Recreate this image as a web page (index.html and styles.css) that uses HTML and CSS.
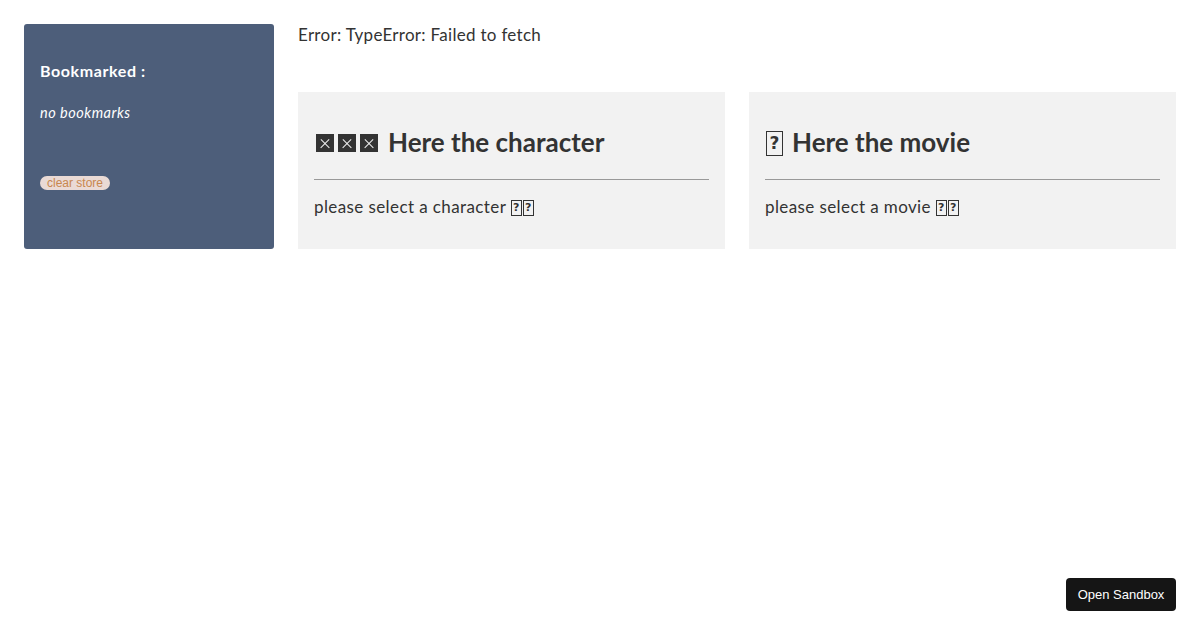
FILE: index.html
```html
<!DOCTYPE html>
<html>
<head>
<meta charset="utf-8">
<link rel="stylesheet" href="styles.css">
</head>
<body>
<div class="app">
  <aside class="sidebar">
    <h3 class="side-title">Bookmarked :</h3>
    <p class="empty">no bookmarks</p>
    <button class="clear">clear store</button>
  </aside>
  <main class="main">
    <p class="error">Error: TypeError: Failed to fetch</p>
    <div class="cards">
      <section class="card">
        <h2 class="card-title"><span class="xbox"></span><span class="xbox"></span><span class="xbox last"></span>Here the character</h2>
        <hr class="rule">
        <p class="card-text">please select a character <span class="qbox">?</span><span class="qbox">?</span></p>
      </section>
      <section class="card">
        <h2 class="card-title"><span class="qbox big">?</span>Here the movie</h2>
        <hr class="rule">
        <p class="card-text">please select a movie <span class="qbox">?</span><span class="qbox">?</span></p>
      </section>
    </div>
  </main>
</div>
<a class="sandbox">Open Sandbox</a>
</body>
</html>
```
FILE: styles.css
```css
* { box-sizing: border-box; }
body {
  margin: 0;
  padding: 24px;
  font-family: Lato, "Open Sans", sans-serif;
  color: #333;
  background: #fff;
}
.app {
  display: flex;
  gap: 24px;
  align-items: flex-start;
}
.sidebar {
  width: 250px;
  flex: none;
  height: 225px;
  background: #4d5e7a;
  border-radius: 3px;
  padding: 36px 16px;
  color: #fff;
}
.side-title {
  margin: 0;
  font-size: 16px;
  font-weight: 700;
  line-height: 22px;
  letter-spacing: 0.6px;
}
.empty {
  margin: 22px 0 0;
  font-size: 14.5px;
  font-style: italic;
  letter-spacing: 0.5px;
}
.clear {
  margin-top: 55px;
  display: block;
  border: none;
  background: #eadad5;
  color: #c8874e;
  font-family: "Liberation Sans", Arial, sans-serif;
  font-size: 12px;
  border-radius: 8px;
  padding: 0 7px;
  height: 14px;
  line-height: 14px;
}
.main { flex: 1; }
.error {
  margin: 0;
  font-size: 17px;
  line-height: 22px;
  letter-spacing: 0.3px;
}
.cards {
  margin-top: 46px;
  display: flex;
  gap: 24px;
}
.card {
  flex: 1;
  height: 157px;
  background: #f2f2f2;
  padding: 30px 16px 0;
}
.card-title {
  margin: 0;
  font-size: 26px;
  font-weight: 700;
  line-height: 40px;
  display: flex;
  align-items: center;
}
.xbox {
  display: inline-block;
  width: 18px;
  height: 18px;
  background: #333;
  margin: 2px 4px 0 2px;
  position: relative;
  flex: none;
}
.xbox + .xbox { margin-left: 0; }
.xbox::before, .xbox::after {
  content: "";
  position: absolute;
  left: 3px; top: 8.5px;
  width: 12px; height: 1.3px;
  background: #f2f2f2;
  transform: rotate(45deg);
}
.xbox::after { transform: rotate(-45deg); }
.xbox.last { margin-right: 10px; }
.qbox {
  display: inline-block;
  overflow: hidden;
  width: 11px;
  height: 16px;
  border: 1px solid #333;
  font-family: "DejaVu Sans", sans-serif;
  font-size: 11px;
  font-weight: 700;
  line-height: 14px;
  text-align: center;
  vertical-align: -3px;
  letter-spacing: 0;
}
.qbox + .qbox { margin-left: 1px; }
.qbox.big {
  width: 17px;
  height: 25px;
  border-width: 1.5px;
  font-size: 17px;
  line-height: 22px;
  margin: 2px 9px 0 1px;
  flex: none;
}
.rule {
  margin: 17px 0 0;
  border: none;
  border-top: 1px solid #999;
}
.card-text {
  margin: 16px 0 0;
  font-size: 17px;
  letter-spacing: 0.4px;
}
.sandbox {
  position: fixed;
  right: 24px;
  bottom: 19px;
  width: 110px;
  height: 33px;
  background: #151515;
  color: #fff;
  border-radius: 4px;
  font-family: "Liberation Sans", Arial, sans-serif;
  font-size: 13px;
  display: flex;
  align-items: center;
  justify-content: center;
}
```
